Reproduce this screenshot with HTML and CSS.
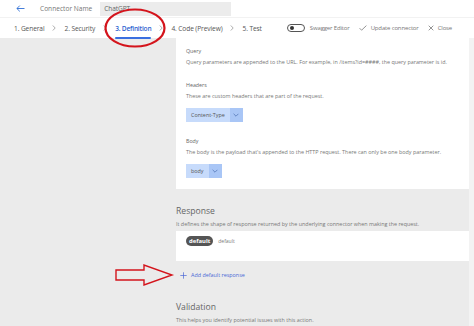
FILE: index.html
```html
<!DOCTYPE html>
<html lang="en">
<head>
    <meta charset="UTF-8">
    <meta name="viewport" content="width=device-width, initial-scale=1.0">
    <title>Custom connector - Definition</title>
    <link rel="stylesheet" href="styles.css">
</head>
<body>
    <div class="topbar">
        <svg class="back" width="9" height="7" viewBox="0 0 9 7">
            <path d="M8.5 3.5H1M3.8 0.6L0.9 3.5l2.9 2.9" fill="none" stroke="#2f6fd6" stroke-width="0.9"/>
        </svg>
        <span class="name-label">Connector Name</span>
        <div class="name-input">ChatGPT</div>
    </div>

    <div class="steps">
        <span class="step">1. General</span>
        <svg class="chev" width="4" height="6" viewBox="0 0 4 6"><path d="M0.8 0.5l2.4 2.5-2.4 2.5" fill="none" stroke="#8a8a8a" stroke-width="0.7"/></svg>
        <span class="step">2. Security</span>
        <svg class="chev" width="4" height="6" viewBox="0 0 4 6"><path d="M0.8 0.5l2.4 2.5-2.4 2.5" fill="none" stroke="#8a8a8a" stroke-width="0.7"/></svg>
        <span class="step active">3. Definition</span>
        <svg class="chev" width="4" height="6" viewBox="0 0 4 6"><path d="M0.8 0.5l2.4 2.5-2.4 2.5" fill="none" stroke="#8a8a8a" stroke-width="0.7"/></svg>
        <span class="step">4. Code (Preview)</span>
        <svg class="chev" width="4" height="6" viewBox="0 0 4 6"><path d="M0.8 0.5l2.4 2.5-2.4 2.5" fill="none" stroke="#8a8a8a" stroke-width="0.7"/></svg>
        <span class="step">5. Test</span>

        <div class="actions">
            <span class="toggle"><span class="knob"></span></span>
            <span class="action">Swagger Editor</span>
            <svg class="icon" width="8" height="6" viewBox="0 0 8 6"><path d="M0.6 3.2l2 2 4.8-4.6" fill="none" stroke="#666" stroke-width="0.7"/></svg>
            <span class="action">Update connector</span>
            <svg class="icon" width="6" height="6" viewBox="0 0 6 6"><path d="M0.7 0.7l4.6 4.6M5.3 0.7L0.7 5.3" fill="none" stroke="#666" stroke-width="0.7"/></svg>
            <span class="action">Close</span>
        </div>
    </div>

    <div class="main">
        <div class="side"></div>

        <div class="content">
            <div class="card">
                <div class="field">
                    <div class="label">Query</div>
                    <div class="hint">Query parameters are appended to the URL. For example, in /items?id=####, the query parameter is id.</div>
                </div>

                <div class="field">
                    <div class="label">Headers</div>
                    <div class="hint">These are custom headers that are part of the request.</div>
                    <div class="param">
                        <span class="param-name">Content-Type</span>
                        <span class="param-drop">
                            <svg width="6" height="4" viewBox="0 0 6 4"><path d="M0.6 0.8L3 3.2 5.4 0.8" fill="none" stroke="#4a6fb0" stroke-width="0.7"/></svg>
                        </span>
                    </div>
                </div>

                <div class="field">
                    <div class="label">Body</div>
                    <div class="hint">The body is the payload that's appended to the HTTP request. There can only be one body parameter.</div>
                    <div class="param">
                        <span class="param-name">body</span>
                        <span class="param-drop">
                            <svg width="6" height="4" viewBox="0 0 6 4"><path d="M0.6 0.8L3 3.2 5.4 0.8" fill="none" stroke="#4a6fb0" stroke-width="0.7"/></svg>
                        </span>
                    </div>
                </div>
            </div>

            <div class="section">
                <h2>Response</h2>
                <div class="hint">It defines the shape of response returned by the underlying connector when making the request.</div>
                <div class="response-box">
                    <span class="pill">default</span>
                    <span class="pill-text">default</span>
                </div>
                <a class="add-link" href="#">
                    <svg width="7" height="7" viewBox="0 0 7 7"><path d="M3.5 0.3v6.4M0.3 3.5h6.4" fill="none" stroke="#4a67d6" stroke-width="0.7"/></svg>
                    Add default response
                </a>
            </div>

            <div class="section">
                <h2>Validation</h2>
                <div class="hint">This helps you identify potential issues with this action.</div>
            </div>
        </div>

        <div class="scrollbar"></div>
    </div>

    <svg class="mark-ellipse" width="64" height="42" viewBox="0 0 64 42">
        <ellipse cx="32" cy="21" rx="29.5" ry="18.5" fill="none" stroke="#d4141c" stroke-width="2.2"/>
    </svg>
    <svg class="mark-arrow" width="60" height="24" viewBox="0 0 60 24">
        <path d="M1 7H29V2L57 12 29 22V17H1Z" fill="none" stroke="#d4141c" stroke-width="1.4" stroke-linejoin="miter"/>
    </svg>
</body>
</html>
```

FILE: styles.css
```css
body {
    margin: 0;
    font-family: 'Open Sans', 'Noto Sans', sans-serif;
    background: #ebebeb;
    color: #333;
    height: 326px;
    overflow: hidden;
    position: relative;
}

.topbar {
    height: 17px;
    background: #ffffff;
    display: flex;
    align-items: center;
    border-bottom: 1px solid #f2f2f2;
}

.back {
    margin-left: 16px;
}

.name-label {
    margin-left: 15px;
    font-size: 6.6px;
    color: #777;
}

.name-input {
    margin-left: 8px;
    width: 127px;
    height: 14px;
    background: #ececec;
    font-size: 6.6px;
    color: #666;
    line-height: 14px;
    padding-left: 4px;
    letter-spacing: -0.1px;
}

.steps {
    height: 20px;
    background: #ffffff;
    display: flex;
    align-items: center;
    padding-left: 14px;
    font-size: 6.6px;
    color: #555;
}

.step {
    letter-spacing: -0.1px;
    position: relative;
}

.step.active {
    color: #2f63d0;
    font-weight: 600;
    letter-spacing: -0.2px;
}

.step.active::after {
    content: "";
    position: absolute;
    left: 0;
    right: 0;
    bottom: -6px;
    height: 2px;
    background: #3a6fe0;
    border-radius: 1px;
}

.chev {
    margin: 0 8px;
}

.actions {
    margin-left: 25px;
    display: flex;
    align-items: center;
}

.toggle {
    width: 18px;
    height: 8px;
    border: 0.8px solid #555;
    border-radius: 5px;
    display: flex;
    align-items: center;
    padding-left: 2px;
    box-sizing: border-box;
}

.knob {
    width: 4px;
    height: 4px;
    border-radius: 50%;
    background: #333;
}

.action {
    color: #777;
    font-size: 6px;
    letter-spacing: -0.15px;
}

.toggle + .action {
    margin-left: 5px;
}

.icon {
    margin: 0 4px 0 9px;
}

.main {
    display: flex;
    height: 288px;
}

.side {
    width: 176px;
    flex-shrink: 0;
}

.content {
    width: 293px;
    flex-shrink: 0;
}

.scrollbar {
    width: 5px;
    margin-left: auto;
    background: #f3f3f3;
}

.card {
    background: #ffffff;
    padding: 9px 10px 8px;
    height: 151px;
    box-sizing: border-box;
}

.field {
    margin-bottom: 15px;
}

.label {
    font-size: 5.3px;
    color: #666;
    line-height: 8px;
}

.hint {
    font-size: 5.4px;
    color: #777;
    line-height: 8px;
    margin-top: 3px;
    white-space: nowrap;
}

.param {
    display: inline-flex;
    margin-top: 7px;
    height: 14px;
}

.param-name {
    background: #c7dbfb;
    font-size: 5.4px;
    color: #555;
    line-height: 14px;
    padding: 0 5px 0 5px;
}

.param-drop {
    width: 13px;
    background: #a9c6f6;
    display: flex;
    align-items: center;
    justify-content: center;
}

.section h2 {
    margin: 17px 0 0;
    font-size: 8.6px;
    font-weight: 400;
    color: #666;
    line-height: 10px;
}

.section .hint {
    margin-top: 4px;
}

.response-box {
    margin-top: 3px;
    background: #ffffff;
    height: 30px;
    display: flex;
    align-items: flex-start;
    padding: 5px 10px 0;
    box-sizing: border-box;
}

.pill {
    background: #555;
    color: #ffffff;
    font-size: 5.9px;
    font-weight: 700;
    line-height: 10px;
    padding: 0 3px;
    border-radius: 5px;
}

.pill-text {
    margin-left: 5px;
    font-size: 5px;
    color: #777;
    line-height: 10px;
}

.add-link {
    display: flex;
    align-items: center;
    gap: 4px;
    margin: 10px 0 0 4px;
    font-size: 5.4px;
    color: #4a67d6;
    text-decoration: none;
}

.section + .section h2 {
    margin-top: 23px;
}

.mark-ellipse {
    position: absolute;
    left: 103px;
    top: 7px;
}

.mark-arrow {
    position: absolute;
    left: 115px;
    top: 263px;
}
```
